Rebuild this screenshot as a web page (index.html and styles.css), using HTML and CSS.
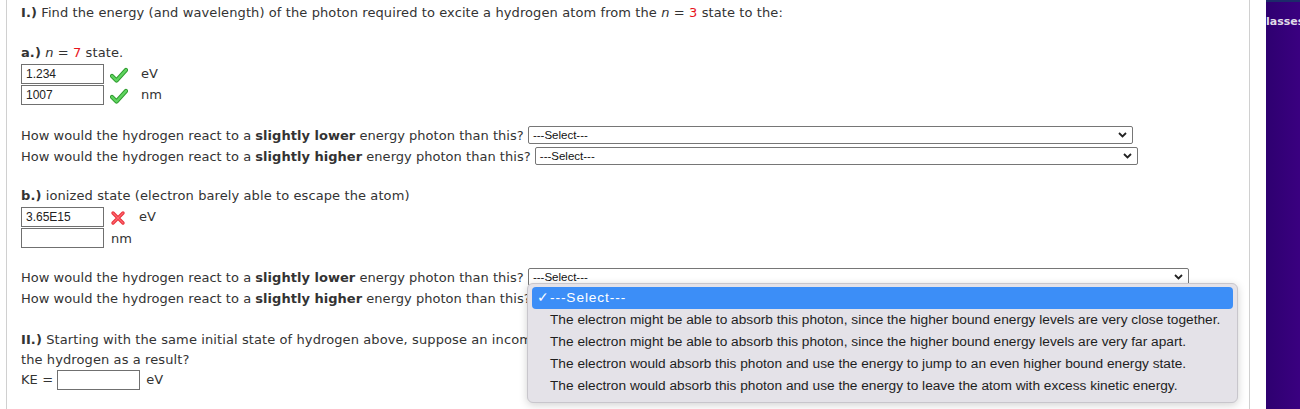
FILE: index.html
```html
<!DOCTYPE html>
<html>
<head>
<meta charset="utf-8">
<link rel="stylesheet" href="styles.css">
</head>
<body>
<div class="page">
  <div class="main">
    <p class="line first"><b>I.)</b> Find the energy (and wavelength) of the photon required to excite a hydrogen atom from the <i>n</i> = <span class="red">3</span> state to the:</p>

    <p class="line part"><b>a.)</b> <i>n</i> = <span class="red">7</span> state.</p>
    <div class="ans">
      <span class="inp">1.234</span>
      <svg class="mark" width="18" height="16" viewBox="0 0 18 16"><path d="M2 9 L6.5 13.5 L16 3" fill="none" stroke="#2f9a2f" stroke-width="4.2" stroke-linecap="round" stroke-linejoin="round"/><path d="M2 9 L6.5 13.5 L16 3" fill="none" stroke="#5fd45f" stroke-width="2.4" stroke-linecap="round" stroke-linejoin="round"/></svg>
      <span class="unit">eV</span>
    </div>
    <div class="ans">
      <span class="inp">1007</span>
      <svg class="mark" width="18" height="16" viewBox="0 0 18 16"><path d="M2 9 L6.5 13.5 L16 3" fill="none" stroke="#2f9a2f" stroke-width="4.2" stroke-linecap="round" stroke-linejoin="round"/><path d="M2 9 L6.5 13.5 L16 3" fill="none" stroke="#5fd45f" stroke-width="2.4" stroke-linecap="round" stroke-linejoin="round"/></svg>
      <span class="unit">nm</span>
    </div>

    <div class="q q1">How would the hydrogen react to a <b>slightly lower</b> energy photon than this? <span class="sel w1"><span>---Select---</span><svg width="9" height="6" viewBox="0 0 9 6"><path d="M1 1 L4.5 4.5 L8 1" fill="none" stroke="#222" stroke-width="1.8"/></svg></span></div>
    <div class="q">How would the hydrogen react to a <b>slightly higher</b> energy photon than this? <span class="sel w2"><span>---Select---</span><svg width="9" height="6" viewBox="0 0 9 6"><path d="M1 1 L4.5 4.5 L8 1" fill="none" stroke="#222" stroke-width="1.8"/></svg></span></div>

    <p class="line part b"><b>b.)</b> ionized state (electron barely able to escape the atom)</p>
    <div class="ans">
      <span class="inp">3.65E15</span>
      <svg class="mark x" width="16" height="16" viewBox="0 0 16 16"><path d="M3 3 L13 13 M13 3 L3 13" fill="none" stroke="#e8333b" stroke-width="3.4" stroke-linecap="round"/><path d="M3 3 L13 13 M13 3 L3 13" fill="none" stroke="#ff6670" stroke-width="1.2" stroke-linecap="round"/></svg>
      <span class="unit">eV</span>
    </div>
    <div class="ans">
      <span class="inp"></span>
      <span class="unit nomark">nm</span>
    </div>

    <div class="q q1 q3">How would the hydrogen react to a <b>slightly lower</b> energy photon than this? <span class="sel w3"><span>---Select---</span><svg width="9" height="6" viewBox="0 0 9 6"><path d="M1 1 L4.5 4.5 L8 1" fill="none" stroke="#222" stroke-width="1.8"/></svg></span></div>
    <div class="q">How would the hydrogen react to a <b>slightly higher</b> energy photon than this? <span class="sel w3"><span>---Select---</span></span></div>

    <p class="line part ii"><b>II.)</b> Starting with the same initial state of hydrogen above, suppose an incoming photon with enough energy ionizes the atom. What kinetic energy does the electron leave</p>
    <p class="line">the hydrogen as a result?</p>
    <div class="ke">KE = <span class="inp ke-inp"></span> <span class="unit2">eV</span></div>

    <div class="popup">
      <div class="opt active"><span class="chk">✓</span><span class="sel-text">---Select---</span></div>
      <div class="opt">The electron might be able to absorb this photon, since the higher bound energy levels are very close together.</div>
      <div class="opt">The electron might be able to absorb this photon, since the higher bound energy levels are very far apart.</div>
      <div class="opt">The electron would absorb this photon and use the energy to jump to an even higher bound energy state.</div>
      <div class="opt">The electron would absorb this photon and use the energy to leave the atom with excess kinetic energy.</div>
    </div>
  </div>
  <div class="gap"></div>
  <div class="side"><span class="side-title">Classes</span></div>
</div>
</body>
</html>
```

FILE: styles.css
```css
html, body {
  margin: 0;
  padding: 0;
  background: #fff;
}
body {
  font-family: "DejaVu Sans", Verdana, sans-serif;
  font-size: 13px;
  letter-spacing: 0.1px;
  color: #333;
  overflow: hidden;
  height: 409px;
}
.page {
  display: flex;
  height: 409px;
  padding-left: 6px;
}
.main {
  position: relative;
  width: 1228px;
  border-left: 1px solid #d0d0d0;
  border-right: 1px solid #d0d0d0;
  padding: 3px 0 0 14px;
  white-space: nowrap;
  overflow: hidden;
}
.gap {
  width: 16px;
}
.side {
  flex: 1;
  background: linear-gradient(90deg, #2e0070, #3a0080);
  border-top: 2px solid #1d2a6a;
  overflow: hidden;
}
.side-title {
  display: block;
  margin-left: -8px;
  margin-top: 13px;
  font-family: "DejaVu Sans", sans-serif;
  font-weight: bold;
  font-size: 11px;
  letter-spacing: 0;
  color: #e0dce8;
}
p { margin: 0; }
.line {
  line-height: 20px;
}
.part { margin-top: 20px; }
.part.b { margin-top: 19px; }
.part.ii { margin-top: 21px; }
b { font-weight: bold; }
i { font-style: italic; }
.red { color: #e8141c; }

.ans {
  display: flex;
  align-items: center;
  height: 21px;
}
.inp {
  box-sizing: border-box;
  display: inline-block;
  width: 83px;
  height: 20px;
  margin-top: 1px;
  border: 1px solid #707070;
  font-family: "Liberation Sans", Arial, sans-serif;
  font-size: 12px;
  letter-spacing: 0;
  line-height: 18px;
  padding-left: 4px;
  color: #222;
  background: #fff;
}
.mark {
  margin-left: 6px;
  margin-top: 3px;
}
.unit {
  margin-left: 13px;
}
.unit.nomark {
  margin-left: 7px;
  margin-top: 2px;
}

.q {
  height: 21px;
  line-height: 21px;
  letter-spacing: 0.03px;
}
.q1 { margin-top: 20px; }
.q3 { margin-top: 19px; }
.sel {
  box-sizing: border-box;
  display: inline-flex;
  vertical-align: middle;
  align-items: center;
  justify-content: space-between;
  height: 18px;
  margin-top: -3px;
  border: 1px solid #767676;
  border-radius: 2px;
  padding: 0 5px 0 4px;
  font-family: "Liberation Sans", Arial, sans-serif;
  font-size: 11.5px;
  letter-spacing: 0;
  color: #111;
  background: #fff;
  line-height: 16px;
}
.w1 { width: 605px; }
.w2 { width: 603px; }
.w3 { width: 661px; }

.ke {
  display: flex;
  align-items: center;
  height: 21px;
  margin-top: -1px;
}
.ke-inp {
  width: 83px;
  margin-left: 4px;
  margin-top: 0;
}
.unit2 { margin-left: 6px; }

.popup {
  position: absolute;
  left: 520px;
  top: 283px;
  box-sizing: border-box;
  width: 711px;
  height: 120px;
  background: #e4e2e8;
  border: 1px solid #c8c6cc;
  border-radius: 6px;
  box-shadow: 0 2px 8px rgba(0,0,0,0.18);
  padding: 3px 4px;
  font-family: "Liberation Sans", Arial, sans-serif;
  font-size: 13.7px;
  letter-spacing: 0;
  color: #1e1e1e;
}
.opt {
  height: 22px;
  line-height: 22px;
  padding-left: 18px;
  position: relative;
}
.opt.active {
  background: #3c8ef7;
  color: #fff;
  border-radius: 4px;
}
.sel-text {
  letter-spacing: 0.9px;
}
.chk {
  position: absolute;
  left: 5px;
  top: 0;
}
```
